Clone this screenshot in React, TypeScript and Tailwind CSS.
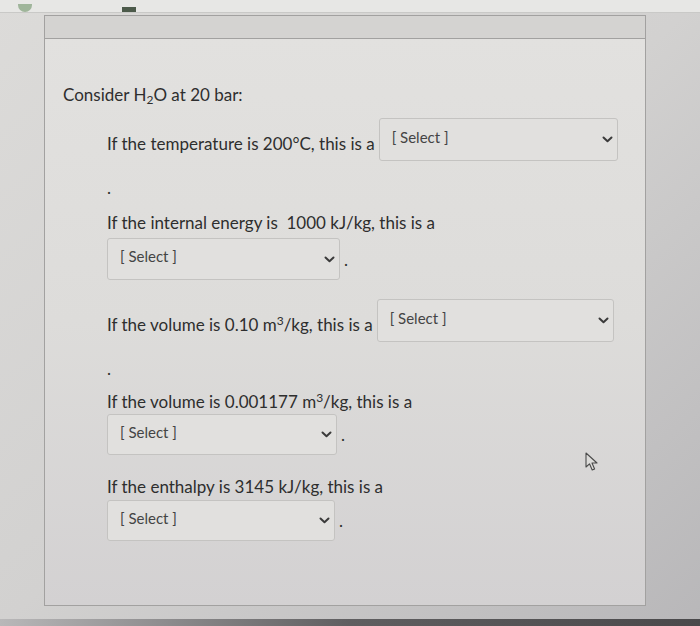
import React from 'react';

const Chevron: React.FC = () => (
  <svg width="11" height="7" viewBox="0 0 11 7" className="shrink-0">
    <polyline points="1.5,1.5 5.5,5.2 9.5,1.5" fill="none" stroke="#3a3a3a" strokeWidth="2" strokeLinecap="round" strokeLinejoin="round" />
  </svg>
);

interface SelectBoxProps {
  width: string;
  height: string;
}

const SelectBox: React.FC<SelectBoxProps> = ({ width, height }) => (
  <div
    className={`${width} ${height} shrink-0 rounded-[3px] border border-[#c4c3c1] bg-[#e1e0de] flex items-center justify-between pl-[12px] pr-[4px]`}
  >
    <span className="text-[15px] leading-none text-[#444] -mt-[5px]">[ Select ]</span>
    <Chevron />
  </div>
);

const Cursor: React.FC = () => (
  <svg width="14" height="20" viewBox="0 0 14 20" className="absolute left-[585px] top-[452px]">
    <path
      d="M1 1 L1 15 L4.5 11.8 L7.2 18 L9.6 17 L7 11 L12 11 Z"
      fill="#dcdbd9"
      stroke="#4a4a4a"
      strokeWidth="1.1"
      strokeLinejoin="round"
    />
  </svg>
);

export default function App() {
  return (
    <div className="relative w-[700px] h-[626px] overflow-hidden flex flex-col bg-gradient-to-br from-[#dcdbd9] via-[#d2d1d0] to-[#b8b7b9] font-['Lato','Open_Sans',sans-serif] text-[#2e2e2e]">
      {/* browser toolbar edge */}
      <div className="h-[13px] shrink-0 bg-[#e7e7e5] border-b border-[#c9c9c7] flex items-end gap-[90px] pl-[18px]">
        <div className="w-[14px] h-[8px] rounded-b-full bg-[#9fb59a]" />
        <div className="w-[14px] h-[5px] bg-[#4c5a4a]" />
      </div>

      <div className="flex-1 flex flex-col pl-[44px] pr-[54px] pt-[2px]">
        <div className="h-[591px] shrink-0 border border-[#a2a1a0] flex flex-col">
          <div className="h-[23px] shrink-0 bg-[#d4d3d1] border-b border-[#a2a1a0]" />

          <div className="flex-1 bg-gradient-to-b from-[#e2e1df] via-[#dddcda] to-[#d3d1d2] pl-[18px] pt-[44px] text-[17px] leading-[24px]">
            <p>
              Consider H<sub className="text-[12px]">2</sub>O at 20 bar:
            </p>

            <div className="ml-[44px]">
              {/* temperature */}
              <div className="mt-[11px] flex items-start gap-[4px]">
                <span className="mt-[14px] whitespace-nowrap">If the temperature is 200°C, this is a</span>
                <SelectBox width="w-[239px]" height="h-[43px]" />
              </div>
              <p className="mt-[15px]">.</p>

              {/* internal energy */}
              <p className="mt-[11px]">If the internal energy is&nbsp; 1000 kJ/kg, this is a</p>
              <div className="mt-[3px] flex items-end gap-[4px]">
                <SelectBox width="w-[233px]" height="h-[42px]" />
                <span className="mb-[8px]">.</span>
              </div>

              {/* volume */}
              <div className="mt-[19px] flex items-start gap-[4px]">
                <span className="mt-[14px] whitespace-nowrap">
                  If the volume is 0.10 m<sup className="text-[12px]">3</sup>/kg, this is a
                </span>
                <SelectBox width="w-[237px]" height="h-[43px]" />
              </div>
              <p className="mt-[15px]">.</p>

              <p className="mt-[9px]">
                If the volume is 0.001177 m<sup className="text-[12px]">3</sup>/kg, this is a
              </p>
              <div className="flex items-end gap-[4px]">
                <SelectBox width="w-[230px]" height="h-[41px]" />
                <span className="mb-[8px]">.</span>
              </div>

              {/* enthalpy */}
              <p className="mt-[20px]">If the enthalpy is 3145 kJ/kg, this is a</p>
              <div className="mt-[1px] flex items-end gap-[4px]">
                <SelectBox width="w-[228px]" height="h-[41px]" />
                <span className="mb-[8px]">.</span>
              </div>
            </div>
          </div>
        </div>
      </div>

      {/* monitor bezel */}
      <div className="h-[7px] shrink-0 bg-gradient-to-r from-[#b9b8b9] via-[#5f5e60] to-[#4a494b]" />

      <Cursor />
    </div>
  );
}
